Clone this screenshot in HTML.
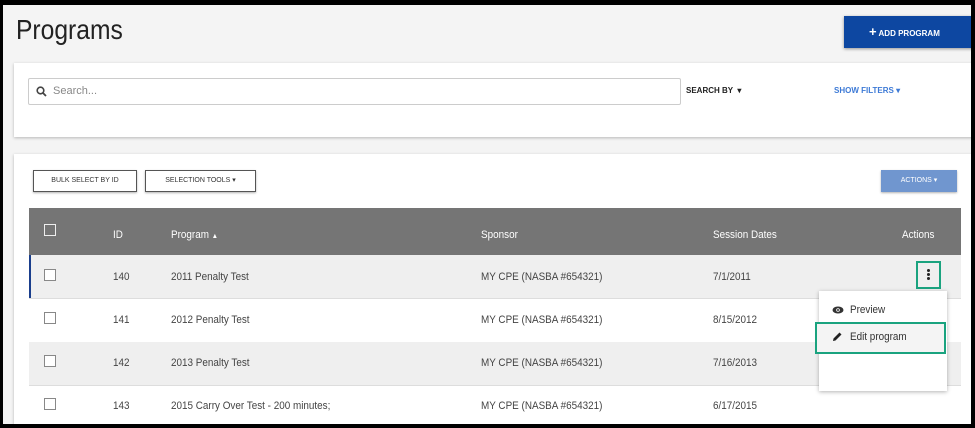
<!DOCTYPE html>
<html><head><style>
*{box-sizing:border-box;margin:0;padding:0}
body{width:975px;height:428px;background:#000;font-family:"Liberation Sans",sans-serif;position:relative;overflow:hidden}
.page{position:absolute;left:3px;top:5px;width:968px;height:419px;background:#f4f4f4;overflow:hidden}
.a{position:absolute}
.card{background:#fff;box-shadow:0 1px 3px rgba(0,0,0,.25)}
.t{font-size:11px;color:#444;position:absolute;transform:scaleX(.9);transform-origin:left;white-space:nowrap}
.cb{position:absolute;width:12px;height:12px;border:1px solid #888;background:#fff}
.btn{position:absolute;border:1px solid #555;background:#fff;font-size:7px;color:#333;text-align:center;line-height:20px;box-shadow:0 1px 2px rgba(0,0,0,.3)}
</style></head><body>
<div class="page">
<div class="a" style="left:13px;top:9px;font-size:28px;color:#222;transform:scaleX(.88);transform-origin:left">Programs</div>
<div class="a" style="left:841px;top:11px;width:130px;height:32px;background:#0d47a1;color:#fff;font-size:8px;font-weight:bold;line-height:32px;padding-left:25px;box-shadow:0 1px 3px rgba(0,0,0,.4)"><span style="font-size:13px">+</span> ADD PROGRAM</div>
<div class="a card" style="left:11px;top:58px;width:960px;height:74px"></div>
<div class="a" style="left:25px;top:73px;width:653px;height:27px;border:1px solid #ccc;border-radius:2px;background:#fff;font-size:11px;color:#888;line-height:25px;padding-left:24px">Search...
<svg class="a" style="left:7px;top:7px" width="11" height="11" viewBox="0 0 11 11"><circle cx="4.5" cy="4.5" r="3.3" stroke="#444" stroke-width="1.6" fill="none"/><path d="M7 7L10 10" stroke="#444" stroke-width="1.8"/></svg></div>
<div class="a" style="left:683px;top:81px;font-size:8px;font-weight:bold;color:#222">SEARCH BY &nbsp;▾</div>
<div class="a" style="left:831px;top:81px;font-size:8px;font-weight:bold;color:#3d7ad6">SHOW FILTERS ▾</div>
<div class="a card" style="left:11px;top:149px;width:960px;height:280px"></div>
<div class="btn" style="left:30px;top:165px;width:104px;height:22px">BULK SELECT BY ID</div>
<div class="btn" style="left:142px;top:165px;width:111px;height:22px">SELECTION TOOLS ▾</div>
<div class="a" style="left:878px;top:165px;width:76px;height:22px;background:#7096cf;color:#fff;font-size:7px;text-align:center;line-height:22px;box-shadow:0 1px 2px rgba(0,0,0,.3)">ACTIONS ▾</div>
<div class="a" style="left:26px;top:203px;width:932px;height:47px;background:#757575"></div>
<div class="cb" style="left:41px;top:219px;border-color:#eee;background:transparent"></div>
<div class="t" style="left:110px;top:224px;color:#fff">ID</div>
<div class="t" style="left:168px;top:224px;color:#fff">Program <span style="font-size:7px">▲</span></div>
<div class="t" style="left:478px;top:224px;color:#fff">Sponsor</div>
<div class="t" style="left:710px;top:224px;color:#fff">Session Dates</div>
<div class="t" style="left:899px;top:224px;color:#fff">Actions</div>
<div class="a" style="left:26px;top:250px;width:932px;height:44px;background:#efefef;border-left:2px solid #1a3e8c"></div>
<div class="a" style="left:26px;top:337px;width:932px;height:43px;background:#efefef"></div>
<div class="a" style="left:26px;top:293px;width:932px;height:1px;background:#ddd"></div>
<div class="a" style="left:26px;top:380px;width:932px;height:1px;background:#ddd"></div>
<div class="cb" style="left:41px;top:264px"></div><div class="t" style="left:110px;top:266px">140</div><div class="t" style="left:168px;top:266px">2011 Penalty Test</div><div class="t" style="left:478px;top:266px">MY CPE (NASBA #654321)</div><div class="t" style="left:710px;top:266px">7/1/2011</div>
<div class="cb" style="left:41px;top:307px"></div><div class="t" style="left:110px;top:309px">141</div><div class="t" style="left:168px;top:309px">2012 Penalty Test</div><div class="t" style="left:478px;top:309px">MY CPE (NASBA #654321)</div><div class="t" style="left:710px;top:309px">8/15/2012</div>
<div class="cb" style="left:41px;top:350px"></div><div class="t" style="left:110px;top:352px">142</div><div class="t" style="left:168px;top:352px">2013 Penalty Test</div><div class="t" style="left:478px;top:352px">MY CPE (NASBA #654321)</div><div class="t" style="left:710px;top:352px">7/16/2013</div>
<div class="cb" style="left:41px;top:393px"></div><div class="t" style="left:110px;top:395px">143</div><div class="t" style="left:168px;top:395px">2015 Carry Over Test - 200 minutes;</div><div class="t" style="left:478px;top:395px">MY CPE (NASBA #654321)</div><div class="t" style="left:710px;top:395px">6/17/2015</div>
<div class="a" style="left:913px;top:256px;width:25px;height:28px;border:2px solid #1aa37f;background:#efefef"></div>
<div class="a" style="left:924px;top:264px;width:3px;height:3px;background:#222;border-radius:50%;box-shadow:0 4px 0 #222,0 8px 0 #222"></div>
<div class="a" style="left:816px;top:286px;width:128px;height:100px;background:#fff;box-shadow:0 1px 4px rgba(0,0,0,.3)"></div>
<svg class="a" style="left:829px;top:301px" width="12" height="8" viewBox="0 0 12 8"><ellipse cx="6" cy="4" rx="5.5" ry="3.5" fill="#333"/><circle cx="6" cy="4" r="1.8" fill="#fff"/><circle cx="6" cy="4" r="1" fill="#333"/></svg>
<div class="t" style="left:847px;top:299px;color:#333">Preview</div>
<div class="a" style="left:812px;top:317px;width:131px;height:32px;border:2px solid #1aa37f;background:#f4f4f4"></div>
<svg class="a" style="left:829px;top:326px" width="11" height="11" viewBox="0 0 11 11"><path d="M1 10L1.5 7.5L7.5 1.5L9.5 3.5L3.5 9.5Z" fill="#222"/></svg>
<div class="t" style="left:847px;top:326px;color:#333">Edit program</div>
</div>
</body></html>
